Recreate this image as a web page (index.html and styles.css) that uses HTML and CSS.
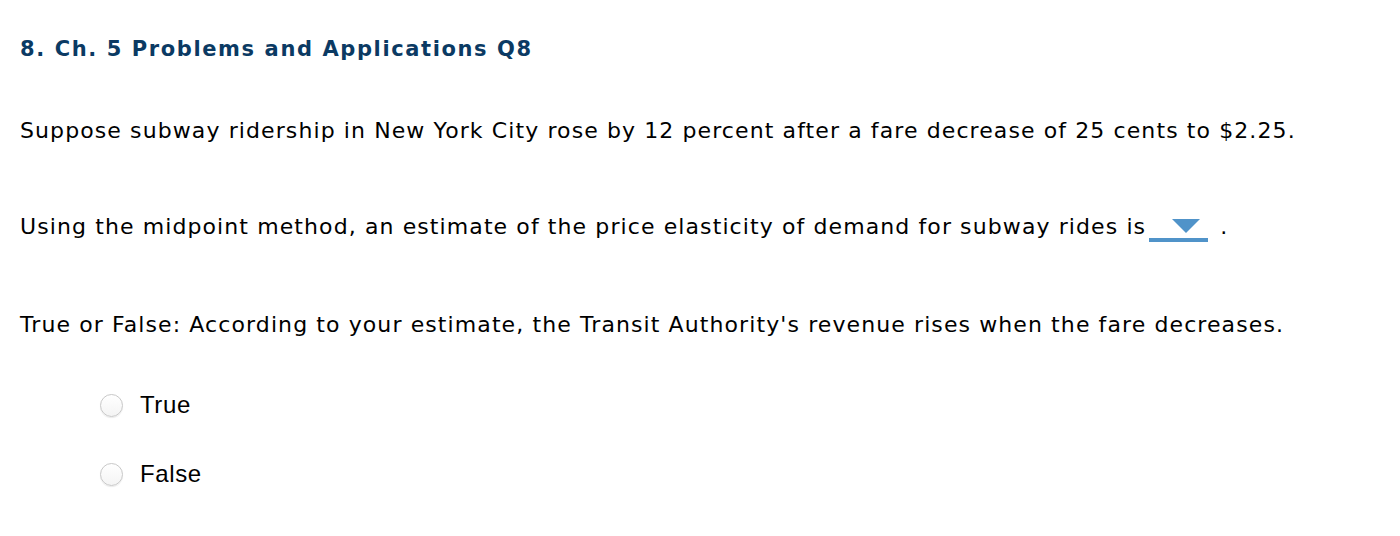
FILE: index.html
```html
<!DOCTYPE html>
<html lang="en">
<head>
    <meta charset="UTF-8">
    <title>Ch. 5 Problems and Applications Q8</title>
    <link rel="stylesheet" href="styles.css">
</head>
<body>
    <div class="question">
        <h2 class="title">8. Ch. 5 Problems and Applications Q8</h2>

        <p class="text first">Suppose subway ridership in New York City rose by 12 percent after a fare decrease of 25 cents to $2.25.</p>

        <p class="text">Using the midpoint method, an estimate of the price elasticity of demand for subway rides is
            <span class="dropdown"><span class="arrow"></span></span> .</p>

        <p class="text">True or False: According to your estimate, the Transit Authority's revenue rises when the fare decreases.</p>

        <div class="choices">
            <label class="choice"><span class="radio"></span>True</label>
            <label class="choice"><span class="radio"></span>False</label>
        </div>
    </div>
</body>
</html>
```

FILE: styles.css
```css
body {
    margin: 0;
    background: #fff;
    font-family: "DejaVu Sans", Verdana, sans-serif;
    color: #000;
}

.question {
    padding: 36px 20px 0 20px;
}

.title {
    margin: 0;
    font-size: 21px;
    font-weight: bold;
    letter-spacing: 1.6px;
    color: #0b3a63;
    line-height: 26px;
}

.text {
    margin: 70px 0 0 0;
    font-size: 22px;
    letter-spacing: 1.1px;
    line-height: 26px;
}

.text.first {
    margin-top: 56px;
}

.dropdown {
    display: inline-block;
    width: 59px;
    height: 24px;
    border-bottom: 4px solid #5093c9;
    margin-left: -5px;
    margin-right: 4px;
    vertical-align: -8px;
    position: relative;
}

.arrow {
    position: absolute;
    left: 23px;
    top: 5px;
    width: 0;
    height: 0;
    border-left: 14px solid transparent;
    border-right: 14px solid transparent;
    border-top: 14px solid #5093c9;
}

.choices {
    margin-top: 52px;
    padding-left: 80px;
}

.choice {
    display: flex;
    align-items: center;
    gap: 17px;
    font-family: "Liberation Sans", Arial, sans-serif;
    font-size: 24px;
    letter-spacing: 0.6px;
    height: 30px;
    margin-bottom: 39px;
}

.radio {
    width: 21px;
    height: 21px;
    border: 1px solid #c8c8c8;
    border-radius: 50%;
    background: linear-gradient(#fff, #f4f4f4);
    box-shadow: 0 1px 1px rgba(0, 0, 0, 0.08);
}
```
